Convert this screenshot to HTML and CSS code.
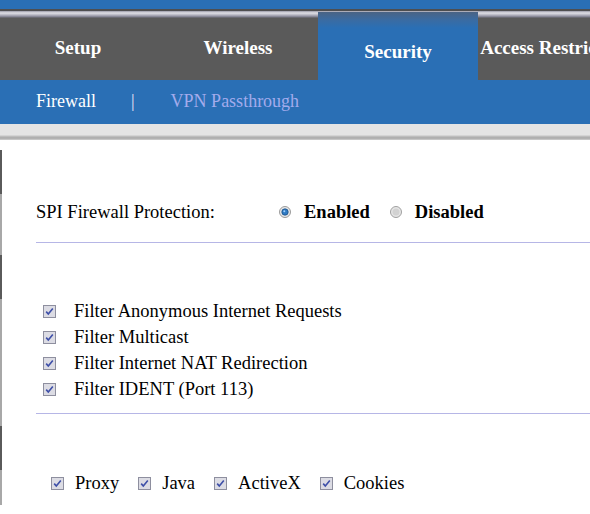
FILE: index.html
```html
<!DOCTYPE html>
<html>
<head>
    <title>Security</title>
    <link rel="stylesheet" href="styles.css">
</head>
<body>
    <div class="topstrip"></div>

    <div class="tabs">
        <div class="tab">Setup</div>
        <div class="tab">Wireless</div>
        <div class="tab active">Security</div>
        <div class="tab">Access Restrictions</div>
    </div>

    <div class="subnav">
        <span class="sub current">Firewall</span>
        <span class="sep">|</span>
        <span class="sub link">VPN Passthrough</span>
    </div>

    <div class="graybar"></div>

    <div class="content">
        <div class="edge">
            <div class="seg dark" style="height: 44px"></div>
            <div class="seg light" style="height: 61px"></div>
            <div class="seg dark" style="height: 44px"></div>
            <div class="seg light" style="height: 127px"></div>
            <div class="seg dark" style="height: 44px"></div>
            <div class="seg light" style="height: 35px"></div>
        </div>

        <div class="main">
            <div class="spi-row">
                <span class="spi-label">SPI Firewall Protection:</span>
                <span class="radio on">
                    <svg width="12" height="12" viewBox="0 0 12 12"><circle cx="6" cy="6" r="5.5" fill="#e8e8e8" stroke="#9a9a9a"/><circle cx="6" cy="6" r="3.2" fill="#2f7bc4" stroke="#1b4f86" stroke-width="0.8"/><circle cx="5.3" cy="5.2" r="1" fill="#9fd0ff"/></svg>
                </span>
                <b class="opt">Enabled</b>
                <span class="radio">
                    <svg width="12" height="12" viewBox="0 0 12 12"><circle cx="6" cy="6" r="5.5" fill="#e6e6e6" stroke="#a0a0a0"/><circle cx="6" cy="6" r="3.5" fill="#d2d2d2"/></svg>
                </span>
                <b class="opt">Disabled</b>
            </div>
            <div class="rule first"></div>

            <div class="filters">
                <div class="filter"><span class="box"><svg width="13" height="13" viewBox="0 0 13 13"><rect x="0.5" y="0.5" width="12" height="12" fill="#dcdce4" stroke="#8e8f9f"/><path d="M3.2 6.6 L5.3 9 L9.8 3.4" fill="none" stroke="#3e4fa8" stroke-width="1.6"/></svg></span>Filter Anonymous Internet Requests</div>
                <div class="filter"><span class="box"><svg width="13" height="13" viewBox="0 0 13 13"><rect x="0.5" y="0.5" width="12" height="12" fill="#dcdce4" stroke="#8e8f9f"/><path d="M3.2 6.6 L5.3 9 L9.8 3.4" fill="none" stroke="#3e4fa8" stroke-width="1.6"/></svg></span>Filter Multicast</div>
                <div class="filter"><span class="box"><svg width="13" height="13" viewBox="0 0 13 13"><rect x="0.5" y="0.5" width="12" height="12" fill="#dcdce4" stroke="#8e8f9f"/><path d="M3.2 6.6 L5.3 9 L9.8 3.4" fill="none" stroke="#3e4fa8" stroke-width="1.6"/></svg></span>Filter Internet NAT Redirection</div>
                <div class="filter"><span class="box"><svg width="13" height="13" viewBox="0 0 13 13"><rect x="0.5" y="0.5" width="12" height="12" fill="#dcdce4" stroke="#8e8f9f"/><path d="M3.2 6.6 L5.3 9 L9.8 3.4" fill="none" stroke="#3e4fa8" stroke-width="1.6"/></svg></span>Filter IDENT (Port 113)</div>
            </div>
            <div class="rule second"></div>

            <div class="web-row">
                <span class="item"><span class="box"><svg width="13" height="13" viewBox="0 0 13 13"><rect x="0.5" y="0.5" width="12" height="12" fill="#dcdce4" stroke="#8e8f9f"/><path d="M3.2 6.6 L5.3 9 L9.8 3.4" fill="none" stroke="#3e4fa8" stroke-width="1.6"/></svg></span>Proxy</span>
                <span class="item"><span class="box"><svg width="13" height="13" viewBox="0 0 13 13"><rect x="0.5" y="0.5" width="12" height="12" fill="#dcdce4" stroke="#8e8f9f"/><path d="M3.2 6.6 L5.3 9 L9.8 3.4" fill="none" stroke="#3e4fa8" stroke-width="1.6"/></svg></span>Java</span>
                <span class="item"><span class="box"><svg width="13" height="13" viewBox="0 0 13 13"><rect x="0.5" y="0.5" width="12" height="12" fill="#dcdce4" stroke="#8e8f9f"/><path d="M3.2 6.6 L5.3 9 L9.8 3.4" fill="none" stroke="#3e4fa8" stroke-width="1.6"/></svg></span>ActiveX</span>
                <span class="item"><span class="box"><svg width="13" height="13" viewBox="0 0 13 13"><rect x="0.5" y="0.5" width="12" height="12" fill="#dcdce4" stroke="#8e8f9f"/><path d="M3.2 6.6 L5.3 9 L9.8 3.4" fill="none" stroke="#3e4fa8" stroke-width="1.6"/></svg></span>Cookies</span>
            </div>
        </div>
    </div>
</body>
</html>
```

FILE: styles.css
```css
body {
    margin: 0;
    padding: 0;
    background-color: white;
    font-family: "Liberation Serif", "Times New Roman", serif;
    color: black;
    overflow: hidden;
}
.topstrip {
    height: 9px;
    background-color: #2a6fb5;
}
.tabs {
    display: flex;
    height: 71px;
    margin-left: -2px;
    background: linear-gradient(to bottom, #4e4e50 0px, #4e4e50 2px, #9a9aa8 2px, #e0e0e6 4px, #b4b4c0 6px, #7c7c8c 8px, #5a5a5a 9px, #5a5a5a 100%);
    overflow: hidden;
}
.tab {
    flex: 0 0 160px;
    display: flex;
    align-items: center;
    justify-content: center;
    color: white;
    font-weight: bold;
    font-size: 19px;
    white-space: nowrap;
    padding-top: 7px;
    box-sizing: border-box;
}
.tab.active {
    margin-top: 3px;
    padding-top: 12px;
    background: linear-gradient(to bottom, #4a6384 0px, #3a6ba2 8px, #2a6fb5 16px, #2a6fb5 100%);
}
.subnav {
    height: 44px;
    background-color: #2a6fb5;
    display: flex;
    align-items: center;
    padding-left: 36px;
    font-size: 18px;
    padding-bottom: 2px;
    box-sizing: border-box;
}
.sub.current {
    color: white;
}
.sep {
    color: #e6e0f4;
    margin-left: 35px;
    margin-right: 36px;
}
.sub.link {
    color: #a3abec;
}
.graybar {
    height: 16px;
    background: linear-gradient(to bottom, #e4e4e4 0px, #e4e4e4 11px, #c4c4c4 12px, #a8a8a8 14px, #d0d0d0 16px);
}
.content {
    display: flex;
    align-items: flex-start;
}
.edge {
    width: 2px;
    margin-top: 10px;
    display: flex;
    flex-direction: column;
}
.seg.dark {
    background-color: #5a5a5a;
}
.seg.light {
    background-color: #a8a8a8;
}
.main {
    flex: 1;
    padding-left: 34px;
    font-size: 18.5px;
}
.spi-row {
    margin-top: 59px;
    height: 26px;
    display: flex;
    align-items: center;
}
.spi-label {
    width: 243px;
}
.radio {
    display: flex;
    margin-right: 13px;
}
.opt {
    margin-right: 20px;
}
.rule {
    height: 1px;
    background-color: #b6b6e6;
}
.rule.first {
    margin-top: 17px;
}
.filters {
    margin-top: 55px;
}
.filter {
    height: 26px;
    display: flex;
    align-items: center;
}
.filter .box {
    margin-left: 7px;
    margin-right: 18px;
}
.box {
    display: flex;
}
.rule.second {
    margin-top: 11px;
}
.web-row {
    margin-top: 56px;
    height: 26px;
    display: flex;
    align-items: center;
    padding-left: 15px;
}
.item {
    display: flex;
    align-items: center;
    margin-right: 19px;
}
.item .box {
    margin-right: 11px;
}
```
